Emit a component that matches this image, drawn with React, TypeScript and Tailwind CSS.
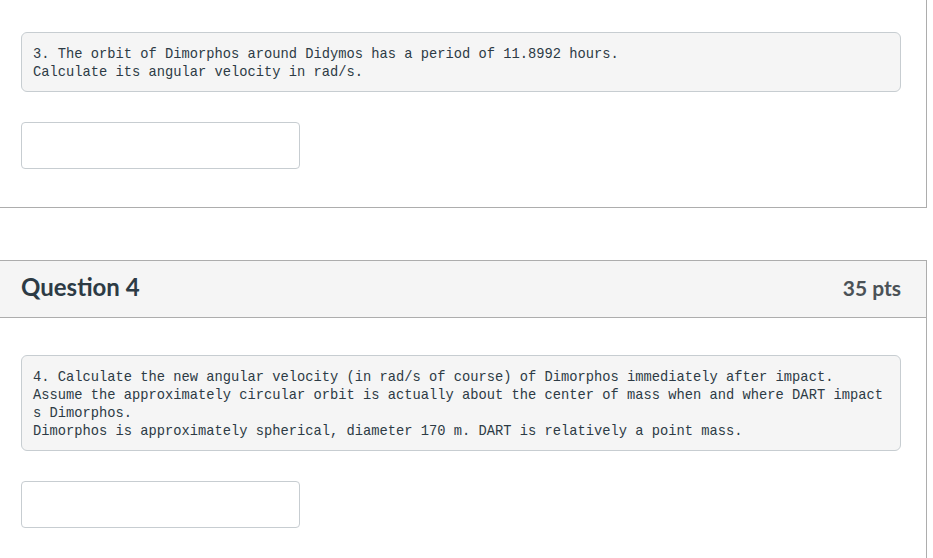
import React from "react";

const mono = { fontFamily: '"Liberation Mono", "DejaVu Sans Mono", monospace' };

export default function App() {
  return (
    <div className="w-[933px] h-[558px] overflow-hidden bg-white" style={{ fontFamily: 'Lato, "Liberation Sans", sans-serif' }}>
      <div className="w-[927px] border-r border-b border-[#adadad] pt-[32px] pb-[38px] pl-[21px] pr-[25px]">
        <div
          className="w-[880px] border border-[#c7cdd1] rounded-[6px] bg-[#f5f5f5] px-[11px] pt-[13px] pb-[9px] text-[13.75px] leading-[18px] text-[#2d3b45] whitespace-pre-wrap break-all"
          style={mono}
        >
          {"3. The orbit of Dimorphos around Didymos has a period of 11.8992 hours.\nCalculate its angular velocity in rad/s."}
        </div>
        <div className="mt-[30px] w-[279px] h-[47px] border border-[#c7cdd1] rounded-[4px] bg-white" />
      </div>

      <div className="mt-[52px] w-[927px] border-t border-r border-[#adadad]">
        <div className="h-[57px] bg-[#f5f5f5] border-b border-[#adadad] flex items-center justify-between pl-[21px] pr-[25px] pb-[4px]">
          <span className="text-[24px] font-bold text-[#2d3b45] leading-none">Question 4</span>
          <span className="text-[21px] font-bold text-[#4b5257] leading-none">35 pts</span>
        </div>
        <div className="pt-[37px] pb-[40px] pl-[21px] pr-[25px]">
          <div
            className="w-[880px] border border-[#c7cdd1] rounded-[6px] bg-[#f5f5f5] px-[11px] pt-[13px] pb-[9px] text-[13.75px] leading-[18px] text-[#2d3b45] whitespace-pre-wrap break-all"
            style={mono}
          >
            {"4. Calculate the new angular velocity (in rad/s of course) of Dimorphos immediately after impact.\nAssume the approximately circular orbit is actually about the center of mass when and where DART impacts Dimorphos.\nDimorphos is approximately spherical, diameter 170 m. DART is relatively a point mass."}
          </div>
          <div className="mt-[30px] w-[279px] h-[47px] border border-[#c7cdd1] rounded-[4px] bg-white" />
        </div>
      </div>
    </div>
  );
}
